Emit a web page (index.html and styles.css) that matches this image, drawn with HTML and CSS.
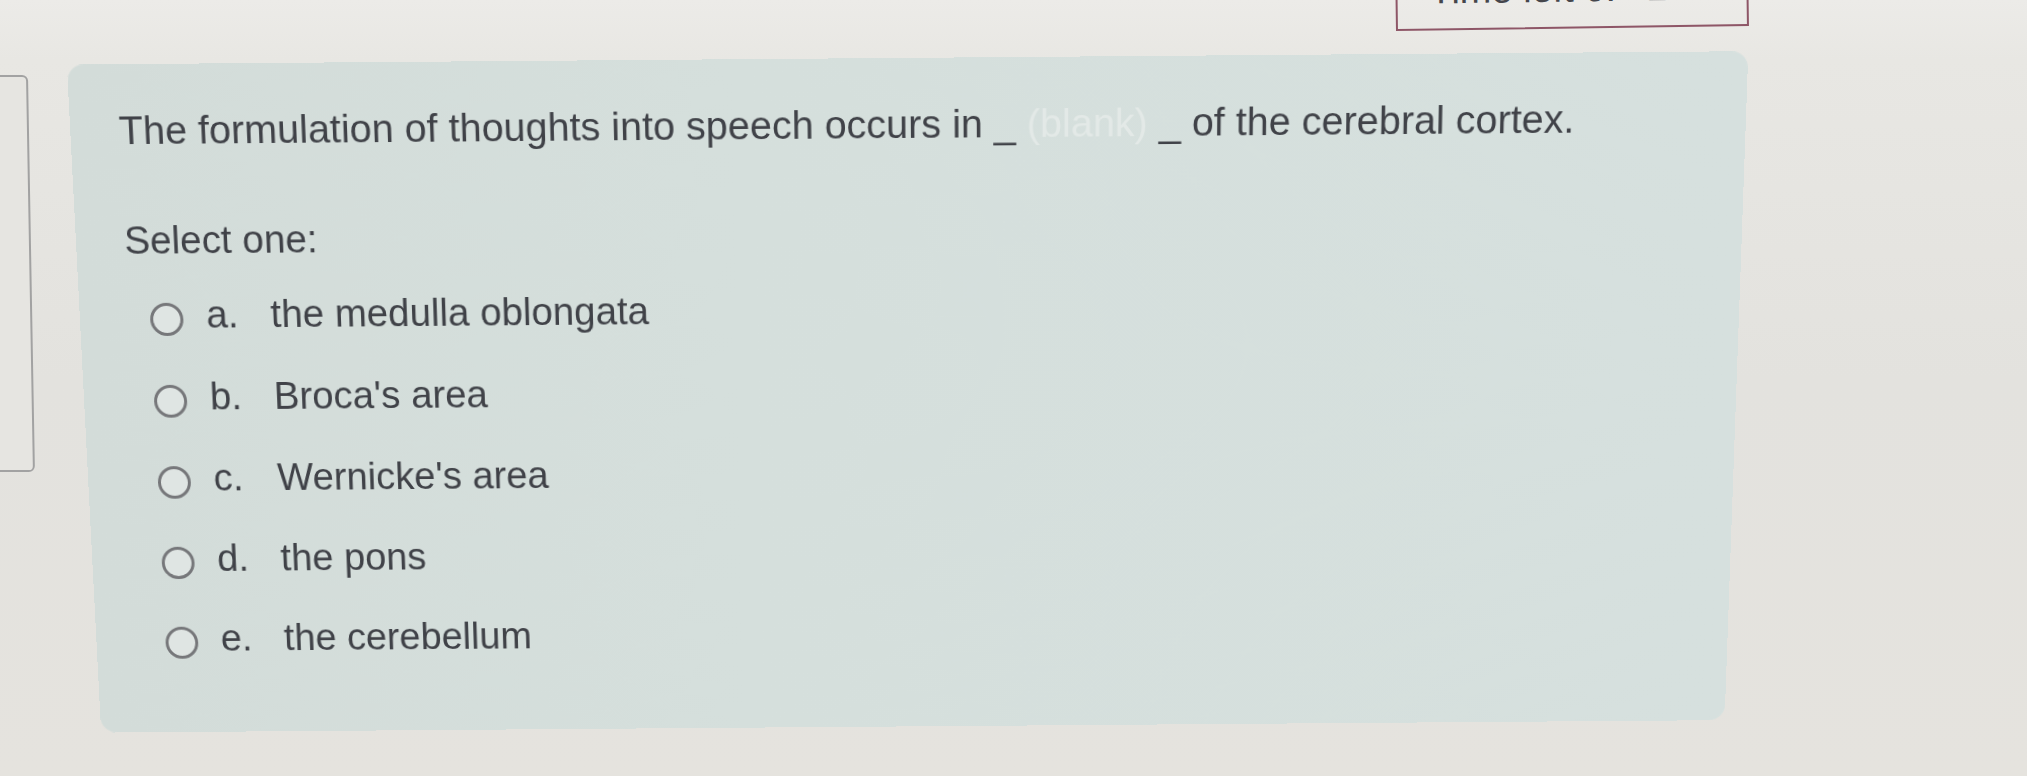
FILE: index.html
```html
<!DOCTYPE html>
<html lang="en">
<head>
<meta charset="utf-8">
<title>Question</title>
<link rel="stylesheet" href="styles.css">
</head>
<body>
<div class="page">
  <div class="topbar">
    <div class="timer"><span class="t-dark">Time left 0:</span><span class="t-light">14:57</span></div>
  </div>
  <div class="main">
    <div class="sidepanel"></div>
    <div class="card">
      <div class="qtext">The formulation of thoughts into speech occurs in _ <span class="blank">(blank)</span> _ of the cerebral cortex.</div>
      <div class="prompt">Select one:</div>
      <div class="answers">
        <div class="opt"><span class="radio"></span><span class="letter">a.</span><span class="label">the medulla oblongata</span></div>
        <div class="opt"><span class="radio"></span><span class="letter">b.</span><span class="label">Broca's area</span></div>
        <div class="opt"><span class="radio"></span><span class="letter">c.</span><span class="label">Wernicke's area</span></div>
        <div class="opt"><span class="radio"></span><span class="letter">d.</span><span class="label">the pons</span></div>
        <div class="opt"><span class="radio"></span><span class="letter">e.</span><span class="label">the cerebellum</span></div>
      </div>
    </div>
  </div>
</div>
</body>
</html>
```
FILE: styles.css
```css
html, body {
  margin: 0;
  padding: 0;
}
body {
  width: 2027px;
  height: 776px;
  overflow: hidden;
  background: linear-gradient(180deg, #ecebe8 0px, #e8e7e3 60px, #e3e2de 380px, #e5e3de 776px);
  font-family: "Liberation Sans", Arial, sans-serif;
  color: #404248;
}
.page {
  width: 2027px;
  height: 776px;
}
.topbar {
  height: 31px;
  display: flex;
  justify-content: flex-end;
  padding-right: 278px;
}
.timer {
  width: 353px;
  height: 62px;
  margin-top: -31px;
  box-sizing: border-box;
  border: 2px solid #8e5667;
  padding: 0 0 16px 32px;
  display: flex;
  align-items: flex-end;
  font-size: 38px;
  line-height: 44px;
  white-space: nowrap;
  overflow: hidden;
  transform: rotate(-0.8deg);
  transform-origin: left bottom;
}
.t-dark {
  color: #45464c;
}
.t-light {
  color: #b3b3b4;
  margin-left: 30px;
}
.main {
  display: flex;
  align-items: flex-start;
}
.sidepanel {
  flex: none;
  width: 60px;
  height: 397px;
  margin-left: -32px;
  margin-top: 44px;
  box-sizing: border-box;
  border: 2px solid #a2a2a2;
  border-radius: 6px;
  background: #e6e5e1;
  transform: skewX(1deg);
  transform-origin: top left;
}
.card {
  flex: none;
  width: 1652px;
  height: 672px;
  box-sizing: border-box;
  margin-left: 56px;
  margin-top: 31px;
  padding: 41px 0 0 48px;
  border-radius: 16px;
  background: linear-gradient(90deg, #d3dcd9 0%, #d5dfdc 40%, #d6e0de 100%);
  transform: perspective(2000px) rotateX(-6deg) rotate(-0.45deg);
  transform-origin: center center;
}
.qtext {
  font-size: 39px;
  line-height: 48px;
  white-space: nowrap;
}
.blank {
  color: #e3e9e7;
}
.prompt {
  margin-top: 61px;
  font-size: 38.3px;
  line-height: 46px;
}
.answers {
  margin-top: 10px;
  margin-left: 22px;
}
.opt {
  display: flex;
  align-items: center;
  height: 82px;
  font-size: 38.3px;
  line-height: 82px;
  white-space: nowrap;
}
.radio {
  flex: none;
  width: 33px;
  height: 33px;
  margin-top: 9px;
  box-sizing: border-box;
  border: 3.5px solid #76777a;
  border-radius: 50%;
  background: #dfe5e3;
}
.letter {
  flex: none;
  width: 64px;
  margin-left: 23px;
}
```
